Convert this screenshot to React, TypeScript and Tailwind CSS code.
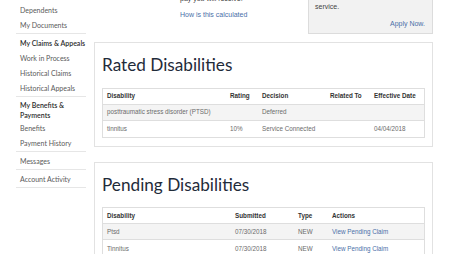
import React from 'react';

const sideLink = 'flex items-center h-[15px] pl-[4px] text-[7px] text-[#5a5a5a] whitespace-nowrap';
const sideHead = 'flex items-center h-[15px] pl-[4px] text-[7px] font-semibold text-[#2e2e2e] whitespace-nowrap';

const Sidebar = () => (
  <aside className="w-[70px] ml-[16px] shrink-0 font-['Lato',sans-serif]">
    <div className="pt-[3px] border-b border-[#e6e6e6]">
      <div className={sideLink}>Dependents</div>
      <div className={sideLink}>My Documents</div>
    </div>
    <div className="pt-[1.5px] border-b border-[#e6e6e6]">
      <div className={sideHead}>My Claims &amp; Appeals</div>
      <div className={sideLink}>Work in Process</div>
      <div className={sideLink}>Historical Claims</div>
      <div className={sideLink}>Historical Appeals</div>
    </div>
    <div className="pt-[3px] border-b border-[#e6e6e6]">
      <div className="pl-[4px] text-[7px] leading-[10.5px] font-semibold text-[#2e2e2e]">
        My Benefits &amp;<br />Payments
      </div>
      <div className={sideLink}>Benefits</div>
      <div className={sideLink}>Payment History</div>
    </div>
    <div className="pt-[2px] border-b border-[#e6e6e6]">
      <div className={sideLink}>Messages</div>
    </div>
    <div className="pt-[2px] border-b border-[#e6e6e6]">
      <div className={sideLink}>Account Activity</div>
    </div>
  </aside>
);

type Col = {label: string};

const Table = ({cols, template, rows}: {cols: Col[]; template: string; rows: React.ReactNode[][]}) => (
  <div className="border border-[#dedede] font-['Liberation_Sans',Arial,sans-serif] text-[6.3px]">
    <div className={`grid ${template} h-[16px] items-center border-b border-[#dedede] bg-white font-bold text-[#333]`}>
      {cols.map((c) => (
        <div key={c.label} className="pl-[4px] whitespace-nowrap">
          {c.label}
        </div>
      ))}
    </div>
    {rows.map((r, i) => (
      <div
        key={i}
        className={`grid ${template} h-[16px] items-center text-[#6b6b6b] ${i % 2 === 0 ? 'bg-[#f4f4f4]' : 'bg-white'} ${i < rows.length - 1 ? 'border-b border-[#dedede]' : ''}`}
      >
        {r.map((cell, j) => (
          <div key={j} className="pl-[4px] whitespace-nowrap">
            {cell}
          </div>
        ))}
      </div>
    ))}
  </div>
);

const Link = ({children}: {children: React.ReactNode}) => <span className="text-[#4a6fa8]">{children}</span>;

export default function App() {
  return (
    <div className="w-[474px] h-[254px] overflow-hidden bg-white flex">
      <Sidebar />
      <main className="ml-[8px] w-[339px] shrink-0 font-['Liberation_Sans',Arial,sans-serif]">
        <div className="flex h-[44px] -mt-[10px]">
          <div className="ml-[86px] pt-[1px] text-[7px] leading-[16px]">
            <div className="text-[#444]">pay you will receive.</div>
            <div className="text-[#4a6fa8]">How is this calculated</div>
          </div>
          <div className="ml-auto w-[125px] h-[44px] bg-[#f2f2f2] border border-[#dcdcdc] flex flex-col text-[7px] pl-[6px] pr-[7px]">
            <div className="mt-[11px] text-[#444]">service.</div>
            <div className="mt-[6px] self-end text-[#4a6fa8]">Apply Now.</div>
          </div>
        </div>

        <section className="mt-[8px] border border-[#e2e2e2] px-[7px] pt-[12px] pb-[8px]">
          <h2 className="font-['Lato',sans-serif] text-[17.2px] leading-[1.2] text-[#1f2b3a] mb-[12px]">Rated Disabilities</h2>
          <Table
            template="grid-cols-[123px_32px_68px_44px_1fr]"
            cols={[{label: 'Disability'}, {label: 'Rating'}, {label: 'Decision'}, {label: 'Related To'}, {label: 'Effective Date'}]}
            rows={[
              ['posttraumatic stress disorder (PTSD)', '', 'Deferred', '', ''],
              ['tinnitus', '10%', 'Service Connected', '', '04/04/2018'],
            ]}
          />
        </section>

        <section className="mt-[15px] border border-[#e2e2e2] px-[7px] pt-[12px] pb-[10px]">
          <h2 className="font-['Lato',sans-serif] text-[17.2px] leading-[1.2] text-[#1f2b3a] mb-[12px]">Pending Disabilities</h2>
          <Table
            template="grid-cols-[128px_63px_34px_1fr]"
            cols={[{label: 'Disability'}, {label: 'Submitted'}, {label: 'Type'}, {label: 'Actions'}]}
            rows={[
              ['Ptsd', '07/30/2018', 'NEW', <Link>View Pending Claim</Link>],
              ['Tinnitus', '07/30/2018', 'NEW', <Link>View Pending Claim</Link>],
            ]}
          />
        </section>
      </main>
    </div>
  );
}
